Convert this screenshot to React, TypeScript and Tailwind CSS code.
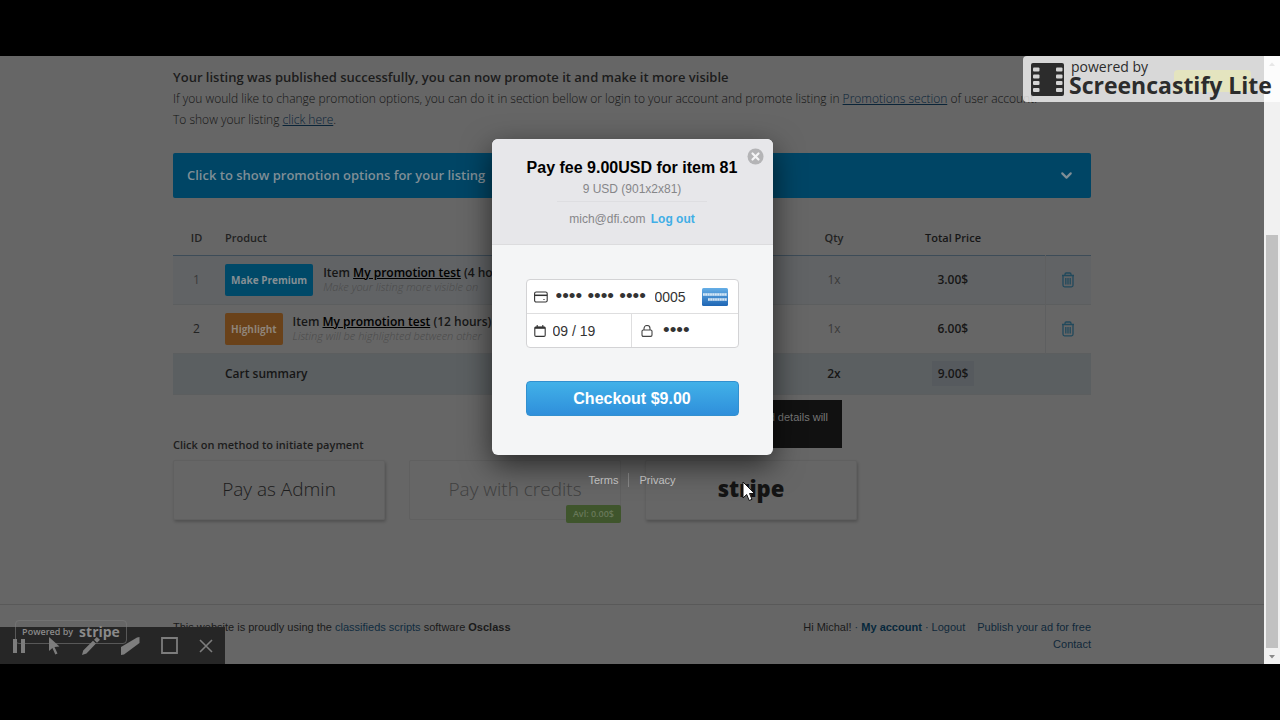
import type { ReactNode } from "react";
import { ChevronDown } from "lucide-react";

function TrashIcon() {
  return (
    <svg width="14" height="16" viewBox="0 0 14 16" fill="none" stroke="#21495c" strokeWidth="1.3">
      <path d="M1 3.5h12M4 3.5V2.2C4 1.4 4.5 1 5.2 1h3.6C9.500 1 10 1.400 10 2.200v1.300M2 3.500v9.800c0 1 .5 1.500 1.500 1.500h7c1 0 1.500-.5 1.500-1.500V3.500M4.800 6v6.500M7 6v6.500M9.200 6v6.500" />
    </svg>
  );
}

function CardIcon() {
  return (
    <svg width="14" height="12" viewBox="0 0 14 12" fill="none" stroke="#333" strokeWidth="1.1">
      <rect x="0.6" y="1" width="12.600" height="10" rx="1.600" />
      <path d="M0.600 4.300h12.600" strokeWidth="1.500" />
      <path d="M9 8.500h2" stroke="#888" />
    </svg>
  );
}

function CalendarIcon() {
  return (
    <svg width="12" height="12" viewBox="0 0 12 12" fill="none" stroke="#333" strokeWidth="1.1">
      <rect x="0.800" y="2" width="10.400" height="9.400" rx="1.200" />
      <path d="M0.800 2.800h10.400" strokeWidth="2" />
      <path d="M3.200 0v2M8.800 0v2" />
    </svg>
  );
}

function LockIcon() {
  return (
    <svg width="12" height="12" viewBox="0 0 12 12" fill="none" stroke="#444" strokeWidth="1.1">
      <rect x="1" y="5" width="10" height="6.400" rx="1.300" />
      <path d="M3 5V3.500a3 3 0 0 1 6 0V5" />
    </svg>
  );
}

function AmexIcon() {
  return (
    <svg width="26" height="18" viewBox="0 0 26 18">
      <defs>
        <linearGradient id="amex" x1="0" y1="0" x2="0" y2="1">
          <stop offset="0" stopColor="#65aee6" />
          <stop offset="1" stopColor="#1f66b4" />
        </linearGradient>
      </defs>
      <rect width="26" height="18" rx="1.500" fill="url(#amex)" />
      <path d="M1 6.500h24" stroke="#d5e7f6" strokeWidth="3" opacity=".55" />
      <path d="M6 11.500h19" stroke="#d5e7f6" strokeWidth="3" opacity=".55" />
      <path d="M1 6.500h24M6 11.500h19" stroke="#e8f3fb" strokeWidth="2" strokeDasharray="1.600 .8" opacity=".8" />
    </svg>
  );
}

function FilmIcon() {
  const holes = [4.5, 11.5, 18, 25];
  return (
    <svg width="33" height="33" viewBox="0 0 33 33">
      <rect width="33" height="33" rx="2" fill="#2c2c2c" />
      {holes.map((y) => (
        <g key={y} fill="#d4d4d4">
          <rect x="2" y={y} width="6.500" height="4" rx="1" />
          <rect x="25" y={y} width="6.500" height="4" rx="1" />
        </g>
      ))}
    </svg>
  );
}

type Row = {
  id: number;
  tag: string;
  tagClass: string;
  hours: string;
  note: string;
  price: string;
  rowClass: string;
  idClass: string;
};

const rows: Row[] = [
  {
    id: 1,
    tag: "Make Premium",
    tagClass: "bg-[#004968] text-[#858f94]",
    hours: "(4 hours)",
    note: "Make your listing more visible on",
    price: "3.00$",
    rowClass: "bg-[#616365]",
    idClass: "text-[#3a3a3a]",
  },
  {
    id: 2,
    tag: "Highlight",
    tagClass: "bg-[#6a421a] text-[#8f8478]",
    hours: "(12 hours)",
    note: "Listing will be highlighted between other",
    price: "6.00$",
    rowClass: "",
    idClass: "text-[#222]",
  },
];

function CartTable() {
  return (
    <table className="mt-[25px] w-full table-fixed border-collapse text-xs text-[#161616]">
      <colgroup>
        <col className="w-[47px]" />
        <col />
        <col className="w-[54px]" />
        <col className="w-[184px]" />
        <col className="w-[46px]" />
      </colgroup>
      <thead>
        <tr className="h-8 border-b border-[#3d4c58] text-[11px]">
          <th className="font-semibold text-[#222]">ID</th>
          <th className="pl-[5px] text-left font-semibold text-[#222]">Product</th>
          <th className="font-semibold text-[#222]">Qty</th>
          <th className="font-semibold">Total Price</th>
          <th />
        </tr>
      </thead>
      <tbody>
        {rows.map((r) => (
          <tr key={r.id} className={`h-[49px] border-b border-[#5c5e5f] ${r.rowClass}`}>
            <td className={`text-center ${r.idClass}`}>{r.id}</td>
            <td className="pl-[5px]">
              <div className="flex items-center gap-2.5">
                <span className={`rounded-xs px-1.5 py-2 text-[10px] leading-4 font-bold ${r.tagClass}`}>{r.tag}</span>
                <div className="pb-0.5 whitespace-nowrap">
                  <div className="leading-4 font-semibold">
                    Item{" "}
                    <a href="#item" className="text-black underline">
                      My promotion test
                    </a>{" "}
                    {r.hours}
                  </div>
                  <div className="text-[11px] leading-3 font-light text-[#4a4a4a] italic">{r.note}</div>
                </div>
              </div>
            </td>
            <td className="text-center text-[#3a3a3a]">1x</td>
            <td className="text-center font-semibold">{r.price}</td>
            <td className="border-l border-[#5e5f60]">
              <button type="button" aria-label={`Remove item ${r.id}`} className="mx-auto block">
                <TrashIcon />
              </button>
            </td>
          </tr>
        ))}
        <tr className="h-[41px] border-b border-[#5c5e5f] bg-[#5b5f61]">
          <td />
          <td className="pl-[5px] font-semibold">Cart summary</td>
          <td className="text-center font-semibold">2x</td>
          <td className="text-center font-semibold">
            <span className="bg-[#565a5e] px-1.5 py-1">9.00$</span>
          </td>
          <td />
        </tr>
      </tbody>
    </table>
  );
}

function PayButton({ children, className = "" }: { children: ReactNode; className?: string }) {
  return (
    <button
      type="button"
      className={`relative flex h-[60px] w-[212px] items-center justify-center rounded-xs border border-[#606060] text-[19px] font-light shadow-[1px_2px_3px_rgba(0,0,0,0.2)] ${className}`}
    >
      {children}
    </button>
  );
}

function CheckoutDialog() {
  return (
    <div className="absolute inset-0 flex flex-col items-center pt-[83px] font-['Liberation_Sans',Arial,sans-serif]">
      <form
        role="dialog"
        aria-label="Checkout"
        className="relative w-[281px] rounded-md bg-[#f4f5f6] shadow-[0_10px_30px_rgba(0,0,0,0.6)]"
      >
        <header className="flex flex-col items-center rounded-t-md border-b border-[#dcdcde] bg-[#e7e7ea] px-8 pt-5 pb-4 text-[#868689]">
          <h1 className="text-base leading-[18px] font-bold text-black">Pay fee 9.00USD for item 81</h1>
          <p className="pt-0.5 text-xs leading-5">9 USD (901x2x81)</p>
          <div className="mt-0.5 w-[150px] border-t border-[#dedee1]" />
          <p className="pt-2 text-xs leading-[18px]">
            mich@dfi.com{" "}
            <a href="#logout" className="ml-0.5 font-bold text-[#41aee6]">
              Log out
            </a>
          </p>
        </header>
        <button type="button" aria-label="Close" className="absolute top-[9px] right-[9px]">
          <svg width="17" height="17" viewBox="0 0 17 17" fill="none">
            <circle cx="8.500" cy="8.500" r="8" fill="#b4b4b6" />
            <path d="M5.500 5.500l6 6M11.500 5.500l-6 6" stroke="#f4f4f5" strokeWidth="2.200" strokeLinecap="round" />
          </svg>
        </button>
        <div className="px-[34px] pt-[34px] pb-[39px] text-[#333]">
          <div className="rounded border border-[#d3d3d5] bg-white">
            <div className="flex h-[34px] items-center border-b border-[#dededf] pr-2.5 pl-[7px]">
              <CardIcon />
              <input
                aria-label="Card number"
                defaultValue="•••• •••• ••••"
                className="ml-2 h-5 w-[99px] bg-transparent text-[19px] outline-none"
              />
              <input
                aria-label="Last four digits"
                defaultValue="0005"
                className="w-10 bg-transparent text-sm outline-none"
              />
              <span className="ml-auto">
                <AmexIcon />
              </span>
            </div>
            <div className="grid h-[33px] grid-cols-2">
              <div className="flex items-center border-r border-[#dededf] pl-[7px]">
                <CalendarIcon />
                <input
                  aria-label="Expiry date"
                  defaultValue="09 / 19"
                  className="ml-[7px] w-16 bg-transparent text-sm outline-none"
                />
              </div>
              <div className="flex items-center pl-[9px]">
                <LockIcon />
                <input
                  aria-label="Security code"
                  defaultValue="••••"
                  className="ml-2.5 h-5 w-14 bg-transparent text-[19px] outline-none"
                />
              </div>
            </div>
          </div>
          <button
            type="button"
            className="mt-[33px] block h-[35px] w-full rounded border border-[#3290cf] bg-linear-to-b from-[#42b1e8] to-[#2f8fdb] text-base leading-8 font-bold text-white"
          >
            Checkout $9.00
          </button>
        </div>
      </form>
      <nav className="mt-[18px] flex text-[11px] leading-3.5 text-[#cfcfcf]">
        <a href="#terms" className="border-r border-[#8a8a8a] pr-2.5">
          Terms
        </a>
        <a href="#privacy" className="pl-2.5">
          Privacy
        </a>
      </nav>
    </div>
  );
}

function RecorderBar() {
  return (
    <div className="absolute bottom-0 left-0 flex h-[37px] w-[225px] items-center bg-[#262626] text-[#7d7d7d]">
      <div className="flex w-full items-center justify-between pr-3 pl-3">
        <button type="button" aria-label="Pause">
          <svg width="14" height="14" viewBox="0 0 14 14" fill="currentColor">
            <path d="M1 0h4v14H1zM9 0h4v14H9z" />
          </svg>
        </button>
        <button type="button" aria-label="Pointer">
          <svg width="14" height="18" viewBox="0 0 14 18" fill="currentColor">
            <path d="M2 0l10.500 9.500-5 .6 3 6.400-2.200 1-2.900-6.500L2 14z" />
          </svg>
        </button>
        <button type="button" aria-label="Pen">
          <svg width="18" height="18" viewBox="0 0 18 18" fill="currentColor">
            <path d="M0 18l1.200-4.500L11 3.800 14 6.600 4.500 16.500zM12 2.800L14.800 0 18 2.800 15 5.700z" />
          </svg>
        </button>
        <button type="button" aria-label="Eraser">
          <svg width="20" height="18" viewBox="0 0 20 18" fill="currentColor">
            <path d="M1 10L17 0.500 19.500 0v6L4 17.500 1 18z" />
          </svg>
        </button>
        <button type="button" aria-label="Crop">
          <svg width="17" height="17" viewBox="0 0 17 17" fill="none" stroke="currentColor" strokeWidth="1.800">
            <path d="M1 1h15v15H1z" />
          </svg>
        </button>
        <button type="button" aria-label="Close toolbar">
          <svg width="14" height="14" viewBox="0 0 14 14" stroke="currentColor" strokeWidth="1.600">
            <path d="M1 1l12 12M13 1L1 13" />
          </svg>
        </button>
      </div>
      <div className="absolute -top-[7px] left-[15px] flex h-6 w-[112px] items-center justify-center gap-1.5 rounded-sm border border-[#7a7a7a]/60 text-[#8a8a8a]">
        <span className="text-[9px] font-semibold">Powered by</span>
        <span className="text-sm leading-5 font-bold">stripe</span>
      </div>
    </div>
  );
}

function Watermark() {
  return (
    <div className="absolute top-0 right-0">
      <div className="absolute top-3.5 right-[29px] h-[22px] w-[77px] rounded-sm bg-[#959300]" />
      <div className="relative flex h-[46px] w-[257px] gap-[5px] rounded-l bg-white/75 pt-[7px] pl-2 text-[#2c2c2c]">
        <FilmIcon />
        <div className="whitespace-nowrap">
          <div className="-mt-1 pl-0.5 text-sm leading-4">powered by</div>
          <div className="text-[23px] leading-5 font-bold">Screencastify Lite</div>
        </div>
      </div>
    </div>
  );
}

function Scrollbar() {
  return (
    <div className="flex w-4 flex-col items-center bg-[#f1f1f1]">
      <svg width="16" height="17" viewBox="0 0 16 17" fill="#a0a0a0">
        <path d="M5 10l3-3.500L11 10z" />
      </svg>
      <div className="flex-[162]" />
      <div className="w-3 flex-[414] bg-[#c1c1c1]" />
      <svg width="16" height="16" viewBox="0 0 16 16" fill="#8a8a8a">
        <path d="M5 7l3 3.500L11 7z" />
      </svg>
    </div>
  );
}

export default function App() {
  return (
    <div className="flex min-h-screen flex-col bg-black py-14 font-['Open_Sans','Noto_Sans',sans-serif]">
      <div className="relative flex flex-1">
        <div className="relative flex min-w-0 flex-1 flex-col bg-[#666]">
          <main className="mx-auto w-full max-w-[918px] flex-1">
            <h2 className="pt-2.5 text-[13px] leading-[22px] font-semibold text-[#1c1c1c]">
              Your listing was published successfully, you can now promote it and make it more visible
            </h2>
            <p className="text-xs leading-[21px] font-light text-[#141414]">
              If you would like to change promotion options, you can do it in section bellow or login to your account and
              promote listing in{" "}
              <a href="#promotions" className="text-[#0a2438] underline">
                Promotions section
              </a>{" "}
              of user account.
              <br />
              To show your listing{" "}
              <a href="#listing" className="text-[#0a2438] underline">
                click here
              </a>
              .
            </p>
            <button
              type="button"
              className="mt-[23px] flex h-[45px] w-full items-center justify-between rounded-xs bg-[#004565] pr-4 pl-3.5 text-[13px] font-semibold text-[#7f8e96]"
            >
              Click to show promotion options for your listing
              <ChevronDown size={17} strokeWidth={3} />
            </button>
            <CartTable />
            <h3 className="mt-10 text-[11px] leading-5 font-semibold text-[#1c1c1c]">Click on method to initiate payment</h3>
            <div className="mt-[5px] flex gap-6">
              <PayButton className="text-[#1c1c1c]">Pay as Admin</PayButton>
              <PayButton className="text-[#404040] shadow-none">
                Pay with credits
                <span className="absolute -right-px -bottom-1 rounded-xs bg-[#3f552c] px-[7px] text-[9px] leading-[18px] font-semibold text-[#68785a]">
                  Avl: 0.00$
                </span>
              </PayButton>
              <div className="relative">
                <PayButton className="pb-1">
                  <span className="text-[22px] leading-6 font-extrabold text-[#141414]">stripe</span>
                </PayButton>
                <div className="absolute right-[15px] bottom-[72px] h-12 w-[180px] bg-[#111] pt-2.5 pr-3.5 text-right font-['Liberation_Sans',Arial,sans-serif] text-[11px] leading-3.5 text-[#777]">
                  card details will
                </div>
              </div>
            </div>
          </main>
          <footer className="border-t border-[#595959] font-['Liberation_Sans',Arial,sans-serif] text-[11px] leading-[17px] text-[#1a1a1a]">
            <div className="mx-auto flex w-full max-w-[918px] justify-between pt-3.5 pb-[11px]">
              <p>
                This website is proudly using the{" "}
                <a href="#scripts" className="text-[#102c40]">
                  classifieds scripts
                </a>{" "}
                software <b>Osclass</b>
              </p>
              <div className="text-right text-[#10283a]">
                <span className="text-[#1a1a1a]">Hi Michal!</span> ·{" "}
                <a href="#account" className="font-bold text-[#06283c]">
                  My account
                </a>{" "}
                · <a href="#logout">Logout</a>
                <a href="#publish" className="ml-3">
                  Publish your ad for free
                </a>
                <br />
                <a href="#contact">Contact</a>
              </div>
            </div>
          </footer>
          <CheckoutDialog />
          <svg
            className="absolute top-[425px] left-1/2 ml-[110px]"
            width="13"
            height="21"
            viewBox="0 0 13 21"
            fill="#fff"
            stroke="#111"
            strokeWidth="1"
          >
            <path d="M1 1v16l3.700-3.500L7.200 19.500l2.800-1.200-2.500-5.800h5z" />
          </svg>
          <RecorderBar />
        </div>
        <Scrollbar />
        <Watermark />
      </div>
    </div>
  );
}
